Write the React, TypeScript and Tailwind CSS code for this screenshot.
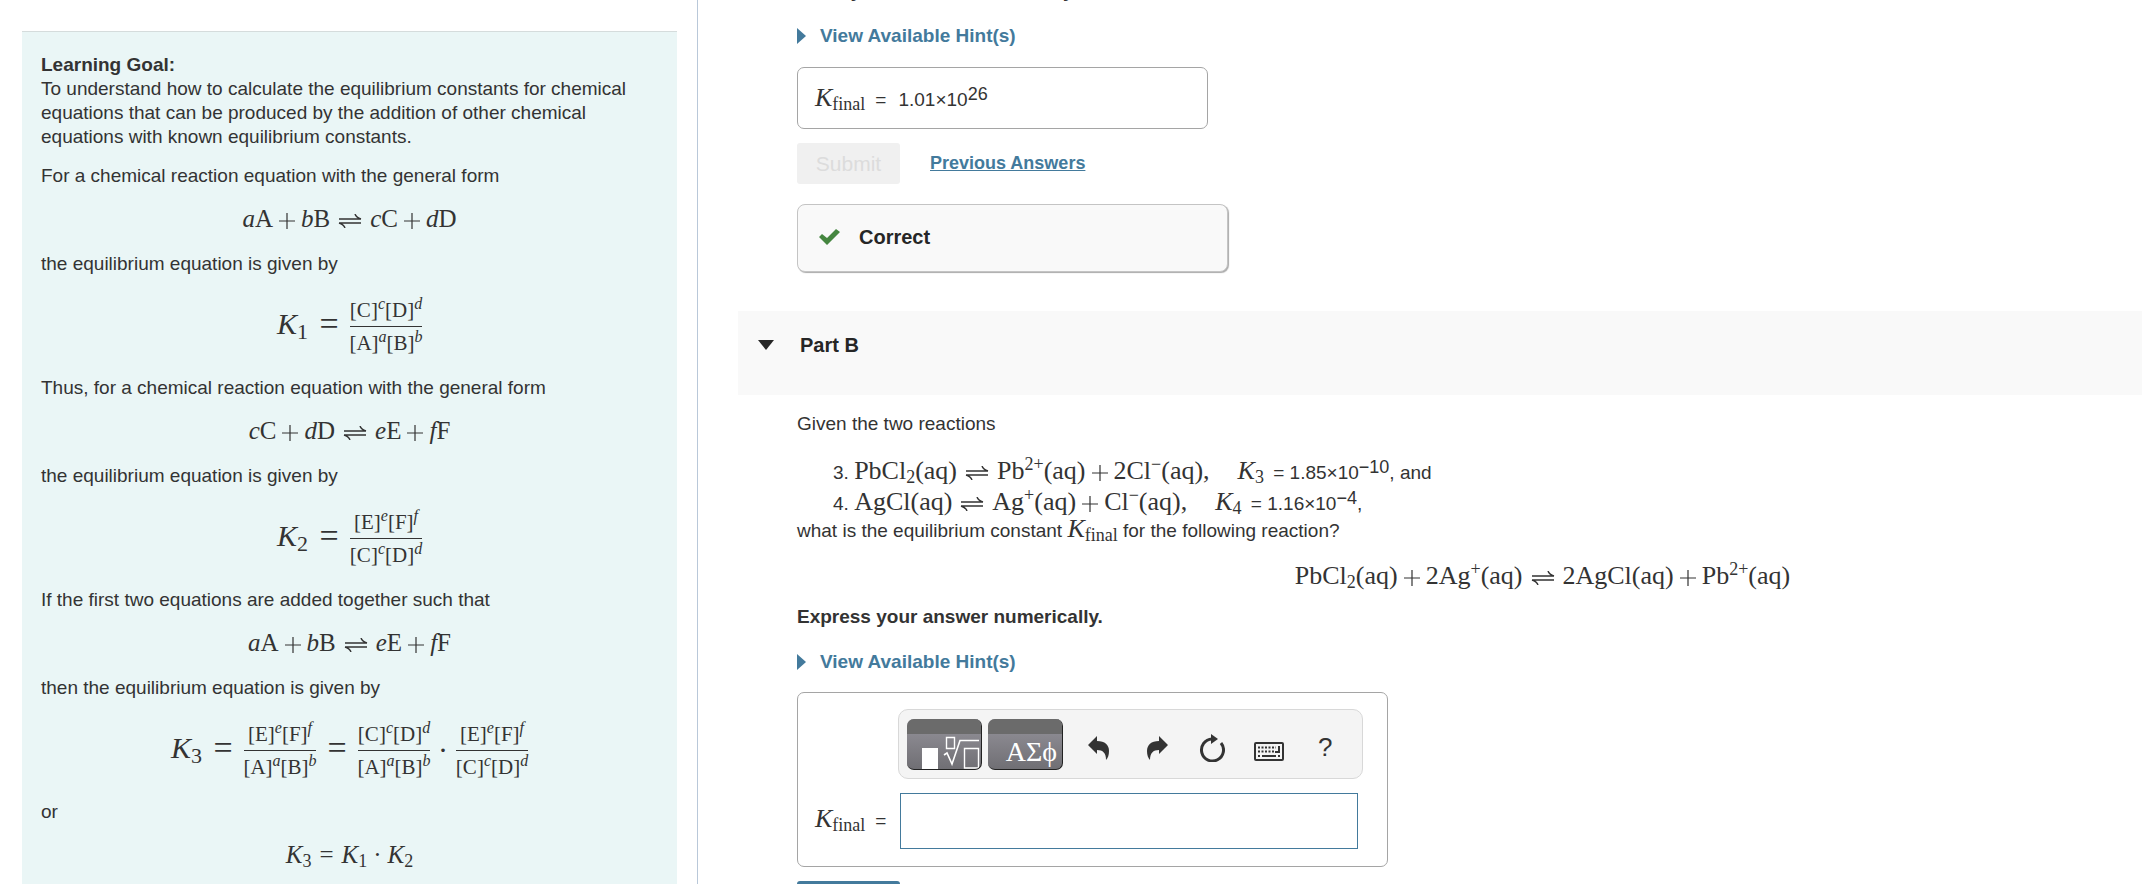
import React, { ReactNode } from 'react';

function Harpoons() {
  return (
    <svg viewBox="0 0 24 14" className="mx-2 inline-block h-[14px] w-6 align-[-1px]" fill="none" stroke="currentColor" strokeWidth="1.4">
      <path d="M1 5H23M23 5C20 4 18 3 17 0" />
      <path d="M23 9H1M1 9C4 10 6 11 7 14" />
    </svg>
  );
}

function Plus() {
  return (
    <svg viewBox="0 0 16 16" className="mx-[6px] inline-block size-4 align-[-2px]" stroke="currentColor" strokeWidth="1.2">
      <path d="M8 0V16M0 8H16" />
    </svg>
  );
}

function Sup({ children }: { children: ReactNode }) {
  return <sup className="top-0 align-[9px] text-[18px] leading-[0]">{children}</sup>;
}

function Exp({ children }: { children: ReactNode }) {
  return <sup className="top-0 align-[6px] text-[18px] leading-[0]">{children}</sup>;
}

function Sub({ children }: { children: ReactNode }) {
  return <sub className="bottom-0 align-[-4px] text-[18px] leading-[0]">{children}</sub>;
}

function Math({ children }: { children: ReactNode }) {
  return <span className="font-['Liberation_Serif',serif] text-[26px] leading-[0] whitespace-nowrap">{children}</span>;
}

function KFinal() {
  return (
    <Math>
      <i>K</i>
      <Sub>final</Sub>
    </Math>
  );
}

function Equation({ children }: { children: ReactNode }) {
  return (
    <div className="flex h-16 items-center justify-center pb-[2px] font-['Liberation_Serif',serif] text-[25px] whitespace-nowrap">
      <span>{children}</span>
    </div>
  );
}

function Conc({ a, x, b, y }: { a: string; x: string; b: string; y: string }) {
  return (
    <span className="flex h-8 items-center justify-center">
      <span>
        [{a}]<sup className="top-0 align-[8px] text-[16px] leading-[0] italic">{x}</sup>[{b}]
        <sup className="top-0 align-[8px] text-[16px] leading-[0] italic">{y}</sup>
      </span>
    </span>
  );
}

function Fraction({ top, bottom }: { top: ReactNode; bottom: ReactNode }) {
  return (
    <span className="inline-flex w-[72px] flex-col text-[21px]">
      {top}
      <span className="h-px bg-[#333]" />
      {bottom}
    </span>
  );
}

const AB = <Conc a="A" x="a" b="B" y="b" />;
const CD = <Conc a="C" x="c" b="D" y="d" />;
const EF = <Conc a="E" x="e" b="F" y="f" />;

function Law({ children }: { children: ReactNode }) {
  return (
    <div className="flex h-[100px] items-center justify-center gap-[11px] font-['Liberation_Serif',serif] text-[30px] leading-8">
      {children}
    </div>
  );
}

function K({ n }: { n: string }) {
  return (
    <span className="pb-1">
      <i>K</i>
      <sub className="bottom-0 align-[-5px] text-[22px] leading-[0]">{n}</sub>
    </span>
  );
}

function Equals() {
  return <span className="w-5 pb-1 text-center text-[34px]">=</span>;
}

function Hints() {
  return (
    <button className="flex items-center gap-[14px] text-[19px] leading-6 font-bold text-[#437a9c]">
      <svg viewBox="0 0 9 16" className="h-4 w-[9px]" fill="currentColor">
        <path d="M0 0L9 8L0 16Z" />
      </svg>
      View Available Hint(s)
    </button>
  );
}

function LearningGoal() {
  return (
    <aside className="mt-[31px] mr-5 ml-[22px] w-[655px] shrink-0 border-t border-[#d5dcdc] bg-[#eaf6f6] px-[19px] pt-[21px] leading-6">
      <h2 className="font-bold">Learning Goal:</h2>
      <p>
        To understand how to calculate the equilibrium constants for chemical equations that can be produced by the
        addition of other chemical equations with known equilibrium constants.
      </p>
      <p className="mt-[15px]">For a chemical reaction equation with the general form</p>
      <Equation>
        <i>a</i>A<Plus /><i>b</i>B<Harpoons /><i>c</i>C<Plus /><i>d</i>D
      </Equation>
      <p>the equilibrium equation is given by</p>
      <Law>
        <K n="1" />
        <Equals />
        <Fraction top={CD} bottom={AB} />
      </Law>
      <p>Thus, for a chemical reaction equation with the general form</p>
      <Equation>
        <i>c</i>C<Plus /><i>d</i>D<Harpoons /><i>e</i>E<Plus /><i>f</i>F
      </Equation>
      <p>the equilibrium equation is given by</p>
      <Law>
        <K n="2" />
        <Equals />
        <Fraction top={EF} bottom={CD} />
      </Law>
      <p>If the first two equations are added together such that</p>
      <Equation>
        <i>a</i>A<Plus /><i>b</i>B<Harpoons /><i>e</i>E<Plus /><i>f</i>F
      </Equation>
      <p>then the equilibrium equation is given by</p>
      <Law>
        <K n="3" />
        <Equals />
        <Fraction top={EF} bottom={AB} />
        <Equals />
        <Fraction top={CD} bottom={AB} />
        <span className="flex w-1 justify-center">·</span>
        <Fraction top={EF} bottom={CD} />
      </Law>
      <p>or</p>
      <Equation>
        <i>K</i><Sub>3</Sub>
        <span className="mx-2">=</span>
        <i>K</i><Sub>1</Sub>
        <span className="mx-[6px]">·</span>
        <i>K</i><Sub>2</Sub>
      </Equation>
    </aside>
  );
}

function Toolbar() {
  return (
    <div className="flex h-[70px] items-center rounded-[10px] border border-[#d8d8d8] bg-[#f4f4f4] px-2">
      <button
        aria-label="Templates"
        className="h-[51px] w-[75px] overflow-hidden rounded-[7px] border-r border-b border-[#222] bg-linear-to-b from-[#96949c] to-[#706f74]"
      >
        <svg viewBox="0 0 74 50" className="h-[50px] w-[74px]" fill="none" stroke="#fff">
          <path d="M0 0H74V15H0Z" fill="#6b6b6b" stroke="none" />
          <path d="M15 29H31V50H15Z" fill="#fff" stroke="none" />
          <path d="M39.500 18.500H47.500V29.500H39.500Z" strokeWidth="1.4" />
          <path d="M37 36L40 34L45 45L53 21.500H72" strokeWidth="1.6" />
          <path d="M57.500 29.500H71.500V49H57.500Z" strokeWidth="1.4" />
        </svg>
      </button>
      <button
        aria-label="Symbols"
        className="ml-[6px] flex h-[51px] w-[75px] flex-col overflow-hidden rounded-[7px] border-r border-b border-[#222] bg-linear-to-b from-[#96949c] to-[#706f74] text-right font-['Liberation_Serif',serif] text-[28px] leading-9 text-white"
      >
        <span className="h-[15px] w-full shrink-0 bg-[#6b6b6b]" />
        <span className="w-full pr-[5px]">ΑΣϕ</span>
      </button>
      <button aria-label="Undo" className="mt-2 ml-[25px]">
        <svg viewBox="0 0 22 24" className="h-6 w-[22px]" fill="currentColor">
          <path d="M0 9L9 0V5C17 5 21 9 21 15C21 19 20 22 18 24C18 17 15 14 9 14V18Z" />
        </svg>
      </button>
      <button aria-label="Redo" className="mt-2 ml-9">
        <svg viewBox="0 0 22 24" className="h-6 w-[22px]" fill="currentColor">
          <path d="M22 9L13 0V5C5 5 1 9 1 15C1 19 2 22 4 24C4 17 7 14 13 14V18Z" />
        </svg>
      </button>
      <button aria-label="Reset" className="mt-2 ml-[31px]">
        <svg viewBox="0 0 26 28" className="h-7 w-[26px]" fill="none" stroke="currentColor" strokeWidth="3">
          <path d="M22 9A11 11 0 1 1 13 5" />
          <path d="M12 0L19 5L12 10Z" fill="currentColor" stroke="none" />
        </svg>
      </button>
      <button aria-label="Keyboard" className="mt-[14px] ml-[29px]">
        <svg viewBox="0 0 30 19" className="h-[19px] w-[30px]" fill="none" stroke="currentColor" strokeWidth="2">
          <rect x="1" y="1" width="28" height="17" rx="1" />
          <path d="M4 5.500H22M4 9.500H20" strokeDasharray="2 1.500" />
          <path d="M25 4V10H21M4 14H6M8 14H22M24 14H26" />
        </svg>
      </button>
      <button aria-label="Help" className="mt-[6px] ml-[34px] text-[26px] leading-8">
        ?
      </button>
    </div>
  );
}

export default function App() {
  return (
    <div className="flex h-screen overflow-hidden bg-white font-['Liberation_Sans',sans-serif] text-[19px] text-[#333]">
      <LearningGoal />
      <main className="min-w-0 flex-1 border-l border-[#b9c8d9]">
        <section className="pl-[99px]">
          <p className="-mt-[21px] leading-6 font-bold">Enter your answer numerically.</p>
          <div className="mt-[21px]">
            <Hints />
          </div>
          <div className="mt-[19px] flex h-[62px] w-[411px] items-center rounded-[7px] border border-[#a5a5a5] px-[17px] pt-[3px] leading-6">
            <p>
              <KFinal />
              <span className="mr-3 ml-[10px]">=</span>
              1.01×10<Exp>26</Exp>
            </p>
          </div>
          <div className="mt-[14px] flex items-center gap-[30px]">
            <button disabled className="h-[41px] w-[103px] rounded-[3px] bg-[#f0f0f0] text-[21px] text-[#dcdcdc]">
              Submit
            </button>
            <a href="#" className="text-[18px] font-bold text-[#437a9c] underline">
              Previous Answers
            </a>
          </div>
          <div className="mt-5 flex h-[68px] w-[431px] items-center gap-[19px] rounded-lg border border-[#c4c4c4] bg-[#f9f9f9] px-[21px] pb-[3px] text-[20px] font-bold text-[#262626] shadow-[1px_1px_1px_#aaa]">
            <svg viewBox="0 0 21 16" className="h-4 w-[21px]" fill="#458640">
              <path d="M0 8L3 5L8 9L17 0L21 3L8 16Z" />
            </svg>
            Correct
          </div>
        </section>

        <header className="mt-[39px] ml-10 h-[84px] bg-[#f9f9f9] pt-5 pl-5">
          <button className="flex items-center gap-[26px] text-[20px] leading-7 font-bold text-[#262626]">
            <svg viewBox="0 0 16 10" className="h-[10px] w-4" fill="currentColor">
              <path d="M0 0H16L8 10Z" />
            </svg>
            Part B
          </button>
        </header>

        <section className="pt-[17px] pl-[99px]">
          <p className="leading-6">Given the two reactions</p>
          <ol className="mt-[21px] ml-9 leading-[31px]">
            <li>
              3. <Math>PbCl<Sub>2</Sub>(aq)<Harpoons />Pb<Sup>2+</Sup>(aq)<Plus />2Cl<Sup>−</Sup>(aq),</Math>
              <span className="mr-1 ml-7"><Math><i>K</i><Sub>3</Sub></Math></span> = 1.85×10<Exp>−10</Exp>, and
            </li>
            <li>
              4. <Math>AgCl(aq)<Harpoons />Ag<Sup>+</Sup>(aq)<Plus />Cl<Sup>−</Sup>(aq),</Math>
              <span className="mr-1 ml-7"><Math><i>K</i><Sub>4</Sub></Math></span> = 1.16×10<Exp>−4</Exp>,
            </li>
          </ol>
          <p className="leading-6">
            what is the equilibrium constant <KFinal /> for the following reaction?
          </p>
          <div className="mt-[23px] mb-[15px] pl-[146px] text-center leading-6">
            <Math>
              PbCl<Sub>2</Sub>(aq)<Plus />2Ag<Sup>+</Sup>(aq)<Harpoons />2AgCl(aq)<Plus />Pb<Sup>2+</Sup>(aq)
            </Math>
          </div>
          <p className="leading-6 font-bold">Express your answer numerically.</p>
          <div className="mt-[21px]">
            <Hints />
          </div>
          <div className="mt-[18px] h-[175px] w-[591px] rounded-[7px] border border-[#a5a5a5] px-[17px] pt-4">
            <div className="ml-[83px] w-[465px]">
              <Toolbar />
            </div>
            <div className="mt-[14px] flex items-center">
              <label htmlFor="k-final" className="w-[85px] leading-6">
                <KFinal />
                <span className="ml-[10px]">=</span>
              </label>
              <input id="k-final" className="h-14 w-[458px] border border-[#437a9c] bg-white px-3" />
            </div>
          </div>
          <button className="mt-[14px] h-[41px] w-[103px] rounded-[3px] bg-[#437a9c] text-[21px] text-white">
            Submit
          </button>
        </section>
      </main>
    </div>
  );
}
